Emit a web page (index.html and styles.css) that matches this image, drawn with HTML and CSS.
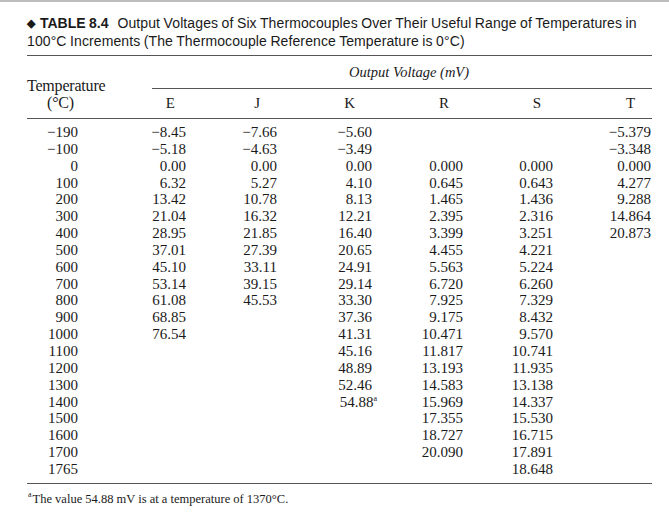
FILE: index.html
```html
<!DOCTYPE html>
<html lang="en">
<head>
<meta charset="utf-8">
<title>Table 8.4</title>
<link rel="stylesheet" href="styles.css">
</head>
<body>
<div class="topbar"></div>
<div class="sheet">
  <h1 class="caption"><span class="tag"><span class="diamond">&#9670;</span>TABLE 8.4</span>Output Voltages of Six Thermocouples Over Their Useful Range of Temperatures in<br>100°C Increments (The Thermocouple Reference Temperature is 0°C)</h1>
  <table class="tc">
    <colgroup>
      <col class="c0"><col class="c1"><col class="c2"><col class="c3"><col class="c4"><col class="c5"><col class="c6">
    </colgroup>
    <thead>
      <tr class="hr1">
        <th class="temp" rowspan="2">Temperature<br><span class="unit">(°C)</span></th>
        <th class="ov" colspan="6"><div class="ovline"><em>Output Voltage (mV)</em></div></th>
      </tr>
      <tr class="hr2">
        <th class="hE">E</th><th class="hJ">J</th><th class="hK">K</th><th class="hR">R</th><th class="hS">S</th><th class="hT">T</th>
      </tr>
    </thead>
    <tbody>
      <tr class="first"><td>−190</td><td>−8.45</td><td>−7.66</td><td>−5.60</td><td></td><td></td><td>−5.379</td></tr>
      <tr><td>−100</td><td>−5.18</td><td>−4.63</td><td>−3.49</td><td></td><td></td><td>−3.348</td></tr>
      <tr><td>0</td><td>0.00</td><td>0.00</td><td>0.00</td><td>0.000</td><td>0.000</td><td>0.000</td></tr>
      <tr><td>100</td><td>6.32</td><td>5.27</td><td>4.10</td><td>0.645</td><td>0.643</td><td>4.277</td></tr>
      <tr><td>200</td><td>13.42</td><td>10.78</td><td>8.13</td><td>1.465</td><td>1.436</td><td>9.288</td></tr>
      <tr><td>300</td><td>21.04</td><td>16.32</td><td>12.21</td><td>2.395</td><td>2.316</td><td>14.864</td></tr>
      <tr><td>400</td><td>28.95</td><td>21.85</td><td>16.40</td><td>3.399</td><td>3.251</td><td>20.873</td></tr>
      <tr><td>500</td><td>37.01</td><td>27.39</td><td>20.65</td><td>4.455</td><td>4.221</td><td></td></tr>
      <tr><td>600</td><td>45.10</td><td>33.11</td><td>24.91</td><td>5.563</td><td>5.224</td><td></td></tr>
      <tr><td>700</td><td>53.14</td><td>39.15</td><td>29.14</td><td>6.720</td><td>6.260</td><td></td></tr>
      <tr><td>800</td><td>61.08</td><td>45.53</td><td>33.30</td><td>7.925</td><td>7.329</td><td></td></tr>
      <tr><td>900</td><td>68.85</td><td></td><td>37.36</td><td>9.175</td><td>8.432</td><td></td></tr>
      <tr><td>1000</td><td>76.54</td><td></td><td>41.31</td><td>10.471</td><td>9.570</td><td></td></tr>
      <tr><td>1100</td><td></td><td></td><td>45.16</td><td>11.817</td><td>10.741</td><td></td></tr>
      <tr><td>1200</td><td></td><td></td><td>48.89</td><td>13.193</td><td>11.935</td><td></td></tr>
      <tr><td>1300</td><td></td><td></td><td>52.46</td><td>14.583</td><td>13.138</td><td></td></tr>
      <tr><td>1400</td><td></td><td></td><td>54.88<sup>a</sup></td><td>15.969</td><td>14.337</td><td></td></tr>
      <tr><td>1500</td><td></td><td></td><td></td><td>17.355</td><td>15.530</td><td></td></tr>
      <tr><td>1600</td><td></td><td></td><td></td><td>18.727</td><td>16.715</td><td></td></tr>
      <tr><td>1700</td><td></td><td></td><td></td><td>20.090</td><td>17.891</td><td></td></tr>
      <tr class="last"><td>1765</td><td></td><td></td><td></td><td></td><td>18.648</td><td></td></tr>
    </tbody>
  </table>
  <p class="note"><sup>a</sup>The value 54.88 mV is at a temperature of 1370°C.</p>
</div>
</body>
</html>
```

FILE: styles.css
```css
html, body {
  margin: 0;
  padding: 0;
  background: #ffffff;
}

.topbar {
  height: 2px;
  background: #bdbdbd;
}

.sheet {
  width: 625px;
  margin-left: 27px;
  color: #1a1a1a;
}

.caption {
  margin: 0;
  padding-top: 12px;
  font-family: "Liberation Sans", Arial, sans-serif;
  font-weight: normal;
  font-size: 14px;
  letter-spacing: 0.1px;
  word-spacing: -0.5px;
  line-height: 18px;
  height: 41px;
  white-space: nowrap;
  border-bottom: 1px solid #555;
}

.caption .tag {
  font-weight: bold;
  letter-spacing: 0;
  margin-right: 9px;
}

.caption .diamond {
  display: inline-block;
  font-size: 11px;
  margin-right: 5px;
  vertical-align: 1px;
}

.tc {
  width: 625px;
  border-collapse: collapse;
  table-layout: fixed;
  font-family: "Liberation Serif", "Times New Roman", serif;
  font-size: 15px;
}

.c0 { width: 51px; }
.c1 { width: 108px; }
.c2 { width: 91px; }
.c3 { width: 95px; }
.c4 { width: 91px; }
.c5 { width: 90px; }
.c6 { width: 99px; }

.tc th {
  font-weight: normal;
  padding: 0;
  line-height: 16px;
}

.tc thead {
  border-bottom: 1px solid #555;
}

.tc .temp {
  text-align: left;
  vertical-align: bottom;
  padding-bottom: 7px;
  white-space: nowrap;
  font-size: 16px;
  letter-spacing: -0.2px;
}

.tc .temp .unit {
  display: inline-block;
  padding-top: 1px;
  padding-left: 20px;
}

.tc .ov {
  padding: 0;
  vertical-align: bottom;
}

.ovline {
  margin-left: 74px;
  padding: 8px 0 8px 14px;
  border-bottom: 1px solid #555;
  text-align: center;
  line-height: 16px;
}

.ovline em {
  font-size: 14.5px;
}

.hr2 th {
  text-align: right;
  padding-top: 6px;
  padding-bottom: 7px;
}

.hr2 .hE { padding-right: 11px; }
.hr2 .hJ { padding-right: 17px; }
.hr2 .hK { padding-right: 17px; }
.hr2 .hR { padding-right: 14px; }
.hr2 .hS { padding-right: 12px; }
.hr2 .hT { padding-right: 17px; }

.tc td {
  text-align: right;
  padding: 0;
  line-height: 16.85px;
  white-space: nowrap;
}

.tc td:last-child {
  padding-right: 1px;
}

.tc tbody tr.first td {
  padding-top: 5px;
}

.tc tbody tr.last td {
  padding-bottom: 5px;
}

.tc tbody {
  border-bottom: 1px solid #555;
}

.tc sup {
  font-size: 8px;
  line-height: 0;
  margin-right: -5px;
  vertical-align: 6px;
}

.note {
  margin: 7px 0 0 0;
  font-family: "Liberation Serif", "Times New Roman", serif;
  font-size: 12.5px;
  line-height: 16px;
  padding-left: 1px;
}

.note sup {
  font-size: 8px;
  line-height: 0;
  vertical-align: 6px;
  margin-right: 1px;
}
```
